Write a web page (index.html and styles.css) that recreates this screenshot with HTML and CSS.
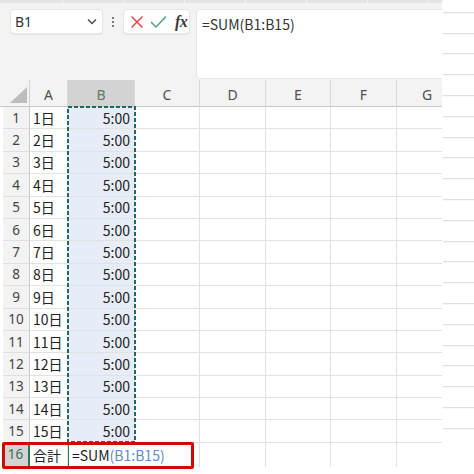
FILE: index.html
```html
<!DOCTYPE html>
<html lang="ja">
<head>
<meta charset="utf-8">
<link rel="stylesheet" href="styles.css">
</head>
<body>
<div class="page">
  <div class="excel">
    <div class="top"><span class="t1"></span><span></span><span></span><span></span><span></span><span></span><span></span><span></span></div>
    <div class="fbar">
      <div class="namebox">
        <span class="nb-text">B1</span>
        <svg class="chev" width="10" height="7" viewBox="0 0 10 7"><polyline points="1,1.5 5,5.5 9,1.5" fill="none" stroke="#444" stroke-width="1.3"/></svg>
      </div>
      <div class="dots"><i></i><i></i><i></i></div>
      <div class="fxbox">
        <svg width="14" height="14" viewBox="0 0 14 14"><path d="M1.5 1.5 L12.5 12.5 M12.5 1.5 L1.5 12.5" stroke="#e2474f" stroke-width="1.5" fill="none"/></svg>
        <svg width="17" height="14" viewBox="0 0 17 14"><polyline points="1,7 6,12 16,1.5" fill="none" stroke="#56a077" stroke-width="1.5"/></svg>
        <span class="fx">fx</span>
      </div>
      <div class="formula">=SUM(B1:B15)</div>
    </div>
    <div class="sheet">
      <div class="row hdr">
        <div class="corner"><svg width="17" height="16" viewBox="0 0 17 16"><polygon points="0,16 17,16 17,0" fill="#bdbdbd"/></svg></div>
        <div class="ch wa">A</div>
        <div class="ch wb sel">B</div>
        <div class="ch wc">C</div>
        <div class="ch wd">D</div>
        <div class="ch we">E</div>
        <div class="ch wf">F</div>
        <div class="ch wg">G</div>
      </div>
      <div class="row"><div class="rh">1</div><div class="c wa">1日</div><div class="c wb v">5:00</div><div class="c wc"></div><div class="c wd"></div><div class="c we"></div><div class="c wf"></div><div class="c wg"></div></div>
      <div class="row"><div class="rh">2</div><div class="c wa">2日</div><div class="c wb v">5:00</div><div class="c wc"></div><div class="c wd"></div><div class="c we"></div><div class="c wf"></div><div class="c wg"></div></div>
      <div class="row"><div class="rh">3</div><div class="c wa">3日</div><div class="c wb v">5:00</div><div class="c wc"></div><div class="c wd"></div><div class="c we"></div><div class="c wf"></div><div class="c wg"></div></div>
      <div class="row"><div class="rh">4</div><div class="c wa">4日</div><div class="c wb v">5:00</div><div class="c wc"></div><div class="c wd"></div><div class="c we"></div><div class="c wf"></div><div class="c wg"></div></div>
      <div class="row"><div class="rh">5</div><div class="c wa">5日</div><div class="c wb v">5:00</div><div class="c wc"></div><div class="c wd"></div><div class="c we"></div><div class="c wf"></div><div class="c wg"></div></div>
      <div class="row"><div class="rh">6</div><div class="c wa">6日</div><div class="c wb v">5:00</div><div class="c wc"></div><div class="c wd"></div><div class="c we"></div><div class="c wf"></div><div class="c wg"></div></div>
      <div class="row"><div class="rh">7</div><div class="c wa">7日</div><div class="c wb v">5:00</div><div class="c wc"></div><div class="c wd"></div><div class="c we"></div><div class="c wf"></div><div class="c wg"></div></div>
      <div class="row"><div class="rh">8</div><div class="c wa">8日</div><div class="c wb v">5:00</div><div class="c wc"></div><div class="c wd"></div><div class="c we"></div><div class="c wf"></div><div class="c wg"></div></div>
      <div class="row"><div class="rh">9</div><div class="c wa">9日</div><div class="c wb v">5:00</div><div class="c wc"></div><div class="c wd"></div><div class="c we"></div><div class="c wf"></div><div class="c wg"></div></div>
      <div class="row"><div class="rh">10</div><div class="c wa">10日</div><div class="c wb v">5:00</div><div class="c wc"></div><div class="c wd"></div><div class="c we"></div><div class="c wf"></div><div class="c wg"></div></div>
      <div class="row"><div class="rh">11</div><div class="c wa">11日</div><div class="c wb v">5:00</div><div class="c wc"></div><div class="c wd"></div><div class="c we"></div><div class="c wf"></div><div class="c wg"></div></div>
      <div class="row"><div class="rh">12</div><div class="c wa">12日</div><div class="c wb v">5:00</div><div class="c wc"></div><div class="c wd"></div><div class="c we"></div><div class="c wf"></div><div class="c wg"></div></div>
      <div class="row"><div class="rh">13</div><div class="c wa">13日</div><div class="c wb v">5:00</div><div class="c wc"></div><div class="c wd"></div><div class="c we"></div><div class="c wf"></div><div class="c wg"></div></div>
      <div class="row"><div class="rh">14</div><div class="c wa">14日</div><div class="c wb v">5:00</div><div class="c wc"></div><div class="c wd"></div><div class="c we"></div><div class="c wf"></div><div class="c wg"></div></div>
      <div class="row"><div class="rh">15</div><div class="c wa">15日</div><div class="c wb v">5:00</div><div class="c wc"></div><div class="c wd"></div><div class="c we"></div><div class="c wf"></div><div class="c wg"></div></div>
      <div class="row r16"><div class="rh rsel">16</div><div class="c wa">合計</div><div class="c wb edit">=SUM<span class="ref">(B1:B15)</span></div><div class="c wc nl"></div><div class="c wd"></div><div class="c we"></div><div class="c wf"></div><div class="c wg"></div></div>
      <svg class="ants" width="69" height="337" viewBox="0 0 69 337"><rect x="1" y="1" width="67" height="335" fill="none" stroke="#22695a" stroke-width="2" stroke-dasharray="4 2"/></svg>
      <div class="redbox"></div>
    </div>
  </div>
  <div class="side"></div>
</div>
</body>
</html>
```
FILE: styles.css
```css
html, body {
  margin: 0;
  padding: 0;
  background: #ffffff;
}
body {
  width: 474px;
  height: 474px;
  overflow: hidden;
  font-family: "Noto Sans CJK JP", "Noto Sans", sans-serif;
  color: #222;
}
.page {
  display: flex;
  height: 474px;
}
.excel {
  width: 442px;
  display: flex;
  flex-direction: column;
}
.side {
  flex: 1;
  margin-left: 1px;
  background: repeating-linear-gradient(to bottom, transparent 0, transparent 19.8px, #d8d8d8 19.8px, #d8d8d8 20.8px);
  background-position: 0 -7.8px;
  height: 454px;
}
.top {
  height: 3px;
  background: #e4e4e4;
  display: flex;
}
.top span {
  width: 60px;
  border-right: 1px solid #f6f6f6;
  flex: none;
}
.top .t1 { width: 62px; }
.top span:last-child { border-right: none; flex: 1; }

.fbar {
  height: 77px;
  box-sizing: border-box;
  background: #f3f3f3;
  display: flex;
  align-items: flex-start;
  padding-top: 6px;
}
.namebox {
  margin-left: 10px;
  width: 93px;
  height: 25px;
  box-sizing: border-box;
  background: #fff;
  border: 1px solid #e6e6e6;
  border-radius: 4px;
  box-shadow: 0 1px 1px rgba(0,0,0,0.06);
  display: flex;
  align-items: center;
  padding: 0 5px 0 4px;
}
.nb-text {
  flex: 1;
  font-family: "Noto Sans", sans-serif;
  font-size: 14px;
  color: #333;
}
.chev { display: block; }
.dots {
  width: 20px;
  height: 25px;
  display: flex;
  flex-direction: column;
  align-items: center;
  justify-content: center;
  gap: 2px;
}
.dots i {
  width: 2px;
  height: 2px;
  background: #555;
  border-radius: 1px;
}
.fxbox {
  width: 67px;
  height: 25px;
  box-sizing: border-box;
  background: #fff;
  border: 1px solid #e6e6e6;
  border-radius: 4px;
  box-shadow: 0 1px 1px rgba(0,0,0,0.06);
  display: flex;
  align-items: center;
  padding-left: 6px;
  gap: 6px;
}
.fxbox svg { display: block; }
.fx {
  font-family: "Liberation Serif", serif;
  font-style: italic;
  font-weight: bold;
  font-size: 16px;
  color: #3a3a3a;
  margin-left: 2px;
  letter-spacing: -0.5px;
}
.formula {
  margin-left: 6px;
  flex: 1;
  height: 70px;
  box-sizing: border-box;
  background: #fff;
  border: 1px solid #e6e6e6;
  border-right: none;
  border-radius: 4px 0 0 4px;
  padding: 4px 0 0 5px;
  font-size: 14px;
  color: #333;
}

.sheet {
  position: relative;
  flex: 1;
  background: #fff;
}
.row {
  display: flex;
  height: 22.4px;
}
.hdr {
  height: 27px;
  background: #f3f3f3;
}
.r16 { height: 24px; }
.corner {
  width: 30px;
  box-sizing: border-box;
  border-right: 1px solid #d4d4d4;
  border-bottom: 1px solid #c8c8c8;
  display: flex;
  align-items: flex-end;
  padding: 0 0 3px 10px;
}
.corner svg { display: block; }
.ch {
  box-sizing: border-box;
  border-right: 1px solid #dadada;
  border-bottom: 1px solid #c8c8c8;
  text-align: center;
  font-family: "Noto Sans", sans-serif;
  font-size: 14px;
  color: #505050;
  line-height: 27px;
  padding-top: 1px;
}
.ch.sel {
  background: #d3d3d3;
  color: #5e7c6c;
}
.ch.wg { text-align: left; padding-left: 25px; border-right: none; }
.wa { width: 38px; }
.wb { width: 67px; }
.wc { width: 65px; }
.wd { width: 66px; }
.we { width: 65px; }
.wf { width: 66px; }
.wg { width: 45px; }
.rh {
  width: 27px;
  margin-left: 3px;
  box-sizing: border-box;
  background: #f3f3f3;
  border-right: 1px solid #c8c8c8;
  border-bottom: 1px solid #e0e0e0;
  text-align: center;
  font-family: "Noto Sans", sans-serif;
  font-size: 13.5px;
  color: #444;
  display: flex;
  align-items: center;
  justify-content: center;
}
.rh.rsel {
  background: #d3d3d3;
  color: #3c6d55;
  border-right: 2px solid #2d7a52;
}
.c {
  box-sizing: border-box;
  border-right: 1px solid #e2e2e2;
  border-bottom: 1px solid #e2e2e2;
  font-size: 14px;
  display: flex;
  align-items: center;
  white-space: nowrap;
}
.c.wa { padding-left: 3px; }
.c.wg { border-right: none; }
.c.v {
  background: #e7edf8;
  justify-content: flex-end;
  padding-right: 4px;
}
.c.edit {
  background: #fff;
  border-left: 1px solid #2d7a52;
  border-right: none;
  padding-left: 3px;
  overflow: visible;
  position: relative;
  z-index: 1;
}
.ref { color: #5b8bd0; }
.r16 .c { border-bottom: none; }
.ants {
  position: absolute;
  left: 67px;
  top: 26px;
  display: block;
}
.redbox {
  position: absolute;
  left: 2px;
  top: 362px;
  width: 192px;
  height: 27px;
  box-sizing: border-box;
  border: 3px solid #cc0a0a;
  border-radius: 2px;
  z-index: 2;
}
```
